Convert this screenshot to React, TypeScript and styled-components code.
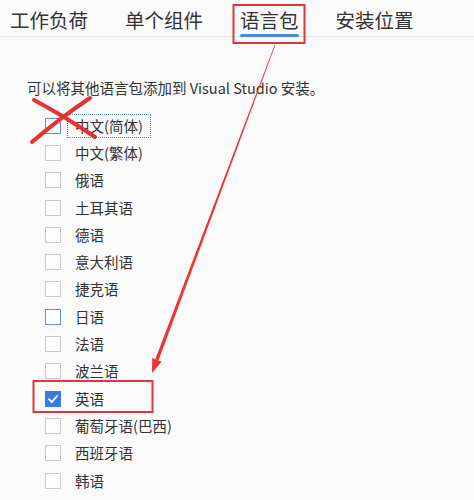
import styled, { createGlobalStyle } from 'styled-components'

const GlobalStyle = createGlobalStyle`
    html, body {
        margin: 0;
        padding: 0;
        background: #fafafa;
    }
    body {
        font-family: "Noto Sans CJK SC", "Noto Sans", sans-serif;
        color: #333333;
    }
`

const tabs = ['工作负荷', '单个组件', '语言包', '安装位置']

type Lang = { name: string; checked?: boolean; blue?: boolean; focused?: boolean }

const languages: Lang[] = [
    { name: '中文(简体)', blue: true, focused: true },
    { name: '中文(繁体)' },
    { name: '俄语' },
    { name: '土耳其语' },
    { name: '德语' },
    { name: '意大利语' },
    { name: '捷克语' },
    { name: '日语', blue: true },
    { name: '法语' },
    { name: '波兰语' },
    { name: '英语', checked: true },
    { name: '葡萄牙语(巴西)' },
    { name: '西班牙语' },
    { name: '韩语' },
]

const App = () => {
    return (
        <Page>
            <GlobalStyle />
            <TabBar>
                {tabs.map((t, i) => (
                    <Tab key={t} $active={i === 2}>{t}</Tab>
                ))}
            </TabBar>
            <Content>
                <Description>可以将其他语言包添加到 Visual Studio 安装。</Description>
                <List>
                    {languages.map(l => (
                        <Row key={l.name}>
                            <Box $checked={l.checked} $blue={l.blue}>
                                {l.checked && (
                                    <svg width="12" height="12" viewBox="0 0 12 12">
                                        <path d="M2 6.2 L4.8 9 L10 3" fill="none" stroke="#fff" strokeWidth="1.9" strokeLinecap="round" strokeLinejoin="round" />
                                    </svg>
                                )}
                            </Box>
                            <Label $focused={l.focused}>{l.name}</Label>
                        </Row>
                    ))}
                </List>
            </Content>
            <Annotations viewBox="0 0 474 500">
                <rect x="233.5" y="5" width="71" height="38" fill="none" stroke="#e0353a" strokeWidth="2" />
                <rect x="33.5" y="381" width="119" height="31" fill="none" stroke="#e0353a" strokeWidth="2" />
                <path d="M34 100 Q64 116 95 137" fill="none" stroke="#e8322f" strokeWidth="4" strokeLinecap="round" />
                <path d="M90 98 Q60 118 32 142" fill="none" stroke="#e8322f" strokeWidth="4" strokeLinecap="round" />
                <polygon points="275.4,45.1 274.6,44.9 155.3,359.3 158.5,360.5" fill="#ee3333" />
                <polygon points="152,373 152.2,358.1 161.6,361.7" fill="#ee3333" />
            </Annotations>
        </Page>
    )
}

const Page = styled.div`
    position: relative;
    width: 474px;
    height: 500px;
    overflow: hidden;
    background: #fafafa;
`

const TabBar = styled.div`
    display: flex;
    gap: 37px;
    padding-left: 10px;
    height: 37px;
    border-bottom: 1px solid #e4e4e4;
    box-sizing: border-box;
`

const Tab = styled.div<{ $active?: boolean }>`
    position: relative;
    font-size: 19.5px;
    line-height: 24px;
    padding-top: 8px;
    color: #333;
    white-space: nowrap;
    &::after {
        content: '';
        display: ${p => (p.$active ? 'block' : 'none')};
        position: absolute;
        left: 0;
        right: 0;
        bottom: -1px;
        height: 3px;
        border-radius: 2px;
        background: #4a86e8;
    }
`

const Content = styled.div`
    padding-left: 27px;
`

const Description = styled.div`
    font-size: 14.5px;
    line-height: 20px;
    margin-top: 41px;
    white-space: nowrap;
`

const List = styled.div`
    margin-top: 14px;
    padding-left: 18px;
    display: flex;
    flex-direction: column;
`

const Row = styled.div`
    display: flex;
    align-items: center;
    height: 27.3px;
`

const Box = styled.div<{ $checked?: boolean; $blue?: boolean }>`
    width: 16px;
    height: 16px;
    box-sizing: border-box;
    display: flex;
    align-items: center;
    justify-content: center;
    border: 1.5px solid ${p => (p.$checked ? '#3b7be0' : p.$blue ? '#5a8ee0' : '#c9c9c9')};
    background: ${p => (p.$checked ? '#3b7be0' : '#fdfdfd')};
`

const Label = styled.div<{ $focused?: boolean }>`
    font-size: 14.5px;
    line-height: 20px;
    margin-left: ${p => (p.$focused ? '8px' : '14px')};
    padding: 0 ${p => (p.$focused ? '6px' : '0')};
    outline: ${p => (p.$focused ? '1px dotted #4f86da' : 'none')};
    outline-offset: 1px;
    white-space: nowrap;
`

const Annotations = styled.svg`
    position: absolute;
    left: 0;
    top: 0;
    width: 474px;
    height: 500px;
    pointer-events: none;
`

export default App
